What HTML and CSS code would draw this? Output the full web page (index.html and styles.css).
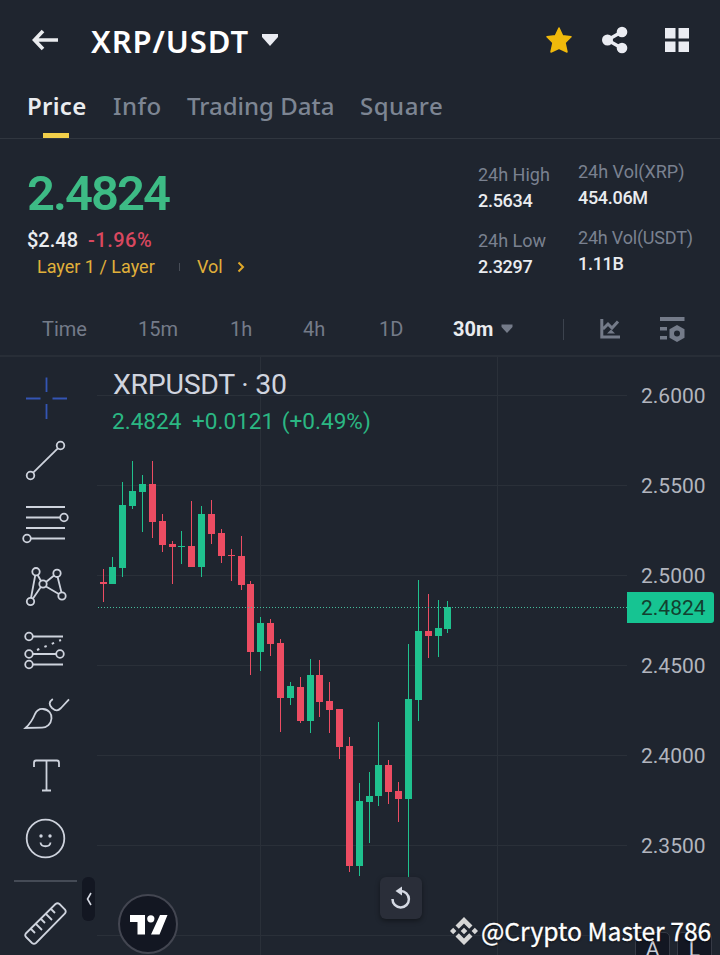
FILE: index.html
```html
<!DOCTYPE html>
<html lang="en">
<head>
    <meta charset="UTF-8">
    <meta name="viewport" content="width=device-width, initial-scale=1.0">
    <title>XRP/USDT</title>
    <link rel="stylesheet" href="styles.css">
</head>
<body>
    <header class="header">
        <svg class="back" width="28" height="22" viewBox="0 0 28 22"><path d="M12 2L3.500 11L12 20M4 11H27"/></svg>
        <h1 class="pair">XRP/USDT</h1>
        <svg class="pair-caret" width="18" height="14" viewBox="0 0 18 14"><path d="M1 1H17V4L9 13L1 4Z"/></svg>
        <div class="header-actions">
            <svg width="28" height="28" viewBox="0 0 28 28"><path class="star" d="M14 2L17.600 9.800L26 10.800L20 16.600L22 26L14 22.300L6 26L8 16.600L2 10.800L10.400 9.800Z"/></svg>
            <svg width="28" height="28" viewBox="0 0 28 28"><path class="share-line" d="M20.500 6L6.500 14L20.500 22"/><g class="light"><circle cx="21" cy="6" r="5.300"/><circle cx="6.500" cy="14" r="5.500"/><circle cx="21" cy="22" r="5.300"/></g></svg>
            <svg width="28" height="28" viewBox="0 0 28 28"><path class="light" d="M2 2H12.500V12.500H2ZM15.500 2H26V12.500H15.500ZM2 15.500H12.500V26H2ZM15.500 15.500H26V26H15.500Z"/></svg>
        </div>
    </header>

    <nav class="tabs">
        <a class="tab active">Price</a>
        <a class="tab tab-info">Info</a>
        <a class="tab tab-data">Trading Data</a>
        <a class="tab tab-square">Square</a>
    </nav>

    <section class="summary">
        <div class="quote">
            <div class="last-price">2.4824</div>
            <div class="fiat"><span class="usd">$2.48</span><span class="change">-1.96%</span></div>
            <div class="tags">
                <span class="tag-layer">Layer 1 / Layer</span>
                <span class="tag-sep"></span>
                <span class="tag-vol">Vol</span>
                <svg width="8" height="12" viewBox="0 0 8 12"><path d="M1.500 1.500L6 6L1.500 10.500"/></svg>
            </div>
        </div>
        <dl class="stats">
            <dt class="high">24h High</dt>
            <dd>2.5634</dd>
            <dt class="low">24h Low</dt>
            <dd>2.3297</dd>
        </dl>
        <dl class="stats volumes">
            <dt class="vol-xrp">24h Vol(XRP)</dt>
            <dd class="amount">454.06M</dd>
            <dt class="vol-usdt">24h Vol(USDT)</dt>
            <dd class="billions">1.11B</dd>
        </dl>
    </section>

    <div class="intervals">
        <span class="i-time">Time</span>
        <span class="i-15m">15m</span>
        <span class="i-1h">1h</span>
        <span class="i-4h">4h</span>
        <span class="i-1d">1D</span>
        <span class="i-30m">30m</span>
        <svg class="i-caret" width="12" height="10" viewBox="0 0 12 10"><path d="M0.500 0.500H11.500V3L6 9L0.500 3Z"/></svg>
        <span class="i-sep"></span>
        <svg class="i-chart" width="20" height="20" viewBox="0 0 20 20"><path class="line" d="M1.800 0V18H20M3 10L8 5L12 9L18 2.500"/><path d="M7 14.500L11 10.500L15 14.500Z"/></svg>
        <svg class="i-settings" width="26" height="26" viewBox="0 0 26 26"><path d="M0 1H24.500V5H0ZM0 11H7V14.500H0ZM0 20H7V23.500H0Z"/><path fill-rule="evenodd" d="M17 9L24.500 13.200V21.800L17 26L9.500 21.800V13.200ZM17 14.500A3 3 0 1 0 17 20.500A3 3 0 1 0 17 14.500Z"/></svg>
    </div>

    <main class="chart">
        <aside class="toolbar">
            <svg viewBox="0 357 97 598" width="97" height="598">
                <!-- crosshair -->
                <path class="cross" d="M46.500 377.500V392M46.500 404V419M26 398.500H40.500M52.500 398.500H67"/>
                <!-- trend line -->
                <path d="M33.200 472.700L57.800 448.300"/>
                <circle cx="30.500" cy="475.500" r="3.800"/><circle cx="60.500" cy="445.500" r="3.800"/>
                <!-- fib levels -->
                <path d="M26 507H65M26 517.500H60M26 528H65M31 538.500H65"/>
                <circle cx="64" cy="517.500" r="3.800"/><circle cx="27" cy="538.500" r="3.800"/>
                <!-- pattern -->
                <path d="M35.300 575L31 598M37.500 574.800L41 581M33 598.500L40.800 587M46 582L54 575.500M57.600 577L61.500 592.500M46 586.500L58.800 594"/>
                <circle cx="36" cy="571.700" r="3.700"/><circle cx="57" cy="573.300" r="3.700"/><circle cx="43" cy="584" r="3.700"/><circle cx="30.500" cy="601.500" r="3.700"/><circle cx="62" cy="596" r="3.700"/>
                <!-- projection -->
                <path d="M33 636.500H63M33 654H56.500M33 664.500H63"/>
                <path class="dots" d="M37 650L61 640"/>
                <circle cx="29" cy="636.500" r="3.800"/><circle cx="29" cy="654" r="3.800"/><circle cx="60" cy="654" r="3.800"/><circle cx="29" cy="664.500" r="3.800"/>
                <!-- brush -->
                <path d="M25.500 728C31 723 33 719 35 714C37 710 40 708.700 43 709C49 709.500 52 714 51.500 718.500C51 724 47 727.700 42 727.700ZM52.800 699C48.500 702 49 705 52 708C56 711.500 58 711 61 708L69 699.300"/>
                <!-- text -->
                <path d="M34 767V763Q34 760.500 36 760.500H57Q59 760.500 59 763V767M46.500 761V790.500M42 790.500H51"/>
                <!-- emoji -->
                <circle cx="45.500" cy="838.500" r="18.800"/>
                <path d="M40.500 842.500C41 847.500 50 847.500 50.500 842.500"/>
                <circle class="eye" cx="41" cy="836" r="1.700"/><circle class="eye" cx="50" cy="836" r="1.700"/>
                <path class="divider" d="M14 881H77"/>
                <!-- ruler -->
                <path d="M25.800 933.500L55.500 904Q57.500 902.500 59.500 904L65 909.500Q66.500 911.500 65 913.500L36 943Q34 944.500 32 943L26 937Q24.500 935.500 25.800 933.500ZM31 929L35 933M36 924L42 930M41 919L45 923M46 914L52 920M51 909L55 913"/>
            </svg>
            <button class="collapse" aria-label="Collapse"><svg width="6" height="14" viewBox="0 0 6 14"><path d="M5 1L1.500 7L5 13"/></svg></button>
        </aside>

        <div class="plot">
            <svg id="candles" viewBox="97 357 530 598" width="530" height="598"></svg>
            <div class="legend">
                <div class="legend-symbol">XRPUSDT · 30</div>
                <div class="legend-values"><span>2.4824</span><span>+0.0121</span><span>(+0.49%)</span></div>
            </div>
            <svg class="tv-badge" width="62" height="62" viewBox="0 0 62 62">
                <circle class="tv-disc" cx="31" cy="31" r="29"/>
                <path d="M13 22H28V41.500H20.500V29H13ZM43 22H50.500L42.500 41.500H34Z"/><circle cx="33.800" cy="25.800" r="3.600"/>
            </svg>
            <button class="reset" aria-label="Reset"><svg width="22" height="24" viewBox="0 0 22 24"><path class="arc" d="M2.500 13A8.200 8.200 0 1 0 10.500 5"/><path class="head" d="M5.500 5L12 0.500V9.500Z"/></svg></button>
        </div>

        <div class="axis">
            <span>2.6000</span>
            <span>2.5500</span>
            <span>2.5000</span>
            <span>2.4500</span>
            <span>2.4000</span>
            <span>2.3500</span>
            <div class="axis-price">2.4824</div>
            <div class="scale-buttons"><button>A</button><button>L</button></div>
        </div>
    </main>

    <div class="watermark">
        <svg width="28" height="28" viewBox="0 0 28 28"><path d="M14 0L22.500 8.500L19.200 11.700L14 6.500L8.800 11.700L5.500 8.500ZM14 28L22.500 19.500L19.200 16.300L14 21.500L8.800 16.300L5.500 19.500ZM0 14L3.200 10.800L6.400 14L3.200 17.200ZM21.600 14L24.800 10.800L28 14L24.800 17.200ZM10.700 14L14 10.700L17.300 14L14 17.300Z"/></svg>
        <span>@Crypto Master 786</span>
    </div>
    <script src="chart.js"></script>
</body>
</html>
```

FILE: styles.css
```css
body {
    background: #1f252f;
    color: #eaecef;
    font-family: Roboto, "Liberation Sans", sans-serif;
    margin: 0;
    height: 955px;
    overflow: hidden;
    position: relative;
}
svg {
    display: block;
    flex: none;
}
span, a, dt, dd {
    white-space: nowrap;
}
button {
    border: none;
    padding: 0;
    font-family: inherit;
}
.header {
    display: flex;
    align-items: center;
    height: 80px;
    padding: 0 29px 0 31px;
    box-sizing: border-box;
}
.back path {
    fill: none;
    stroke: #eaecef;
    stroke-width: 3.6;
}
.back {
    width: 28px;
}
.pair {
    font-family: "Noto Sans", sans-serif;
    font-size: 31px;
    font-weight: 600;
    line-height: 40px;
    letter-spacing: 0.9px;
    color: #fff;
    margin: 1px 0 0 32px;
    width: 158px;
}
.pair-caret {
    margin-left: 12px;
}
.pair-caret path, .light {
    fill: #eaecf2;
}
.header-actions {
    display: flex;
    align-items: center;
    margin-left: auto;
}
.header-actions svg {
    margin-left: 28px;
}
.header-actions svg:last-child {
    margin-left: 34px;
}
.star {
    fill: #f0b90b;
    stroke: #f0b90b;
    stroke-width: 1.5;
    stroke-linejoin: round;
}
.share-line {
    fill: none;
    stroke: #eaecf2;
    stroke-width: 3.4;
}
.tabs {
    display: flex;
    height: 58px;
    padding-left: 27px;
    border-bottom: 1px solid #30363f;
    font-family: "Noto Sans", sans-serif;
    font-size: 24px;
    font-weight: 500;
    line-height: 52px;
    color: #7d8593;
}
.tab {
    letter-spacing: 0.5px;
}
.tab.active {
    color: #eaecef;
    font-weight: 600;
    letter-spacing: 0.3px;
    width: 59px;
    position: relative;
}
.tab.active::after {
    content: "";
    position: absolute;
    left: 16px;
    bottom: 0;
    width: 26px;
    height: 5px;
    background: #f2cf4a;
}
.tab-info {
    margin-left: 27px;
    width: 47px;
}
.tab-data {
    margin-left: 27px;
    width: 146px;
    letter-spacing: 0;
}
.tab-square {
    margin-left: 27px;
}
.summary {
    display: flex;
    height: 164px;
}
.quote {
    width: 478px;
    padding: 27px 0 0 27px;
    box-sizing: border-box;
}
.last-price {
    font-size: 49px;
    font-weight: 600;
    line-height: 56px;
    letter-spacing: -2px;
    color: #3dbb85;
}
.fiat {
    display: flex;
    font-size: 20px;
    font-weight: 500;
    line-height: 24px;
    margin-top: 6px;
}
.usd {
    width: 61px;
}
.change {
    color: #d9485f;
    letter-spacing: 0.5px;
}
.tags {
    display: flex;
    align-items: center;
    margin: 2px 0 0 10px;
    font-size: 18px;
    line-height: 26px;
    color: #e0b03a;
}
.tag-layer {
    width: 142px;
}
.tag-sep {
    width: 1px;
    height: 8px;
    background: #474d57;
}
.tag-vol {
    margin: 0 14px 0 17px;
    width: 26px;
}
.tags path {
    fill: none;
    stroke: #e0a92a;
    stroke-width: 2;
}
.stats {
    margin: 0;
    padding-top: 23px;
    width: 100px;
    font-size: 18px;
    line-height: 26px;
}
.stats.volumes {
    padding-top: 20px;
    width: 130px;
}
.stats dt {
    color: #7a8190;
}
.stats .vol-usdt {
    letter-spacing: -0.2px;
}
.stats dd {
    color: #eaecef;
    font-weight: 500;
    letter-spacing: -0.3px;
    margin: 0 0 14px;
}
.intervals {
    display: flex;
    align-items: center;
    height: 54px;
    padding: 0 0 0 42px;
    border-bottom: 2px solid #282e37;
    box-sizing: border-box;
    font-size: 20px;
    color: #747b89;
}
.intervals path {
    fill: #747b89;
}
.intervals .line {
    fill: none;
    stroke: #747b89;
    stroke-width: 3;
}
.i-time {
    width: 96px;
}
.i-15m {
    width: 92px;
}
.i-1h {
    width: 73px;
}
.i-4h {
    width: 76px;
}
.i-1d {
    width: 74px;
}
.i-30m {
    width: 48px;
    color: #eaecef;
    font-weight: 700;
}
.i-sep {
    width: 1px;
    height: 21px;
    margin-left: 50px;
    background: #3c434e;
}
.i-chart {
    margin-left: 36px;
}
.i-settings {
    margin-left: 40px;
}
.chart {
    display: flex;
    height: 598px;
}
.toolbar {
    width: 97px;
    position: relative;
}
.toolbar path, .toolbar circle {
    fill: none;
    stroke: #ced3dd;
    stroke-width: 1.8;
}
.toolbar .cross {
    stroke: #3455b4;
}
.toolbar .dots {
    stroke-width: 2;
    stroke-dasharray: 2.5 5.5;
}
.toolbar .eye {
    fill: #ced3dd;
    stroke: none;
}
.toolbar .divider {
    stroke: #454b56;
}
.collapse {
    position: absolute;
    left: 82px;
    top: 520px;
    width: 13px;
    height: 44px;
    border-radius: 6px;
    background: #131722;
    display: flex;
    align-items: center;
    justify-content: center;
}
.plot {
    width: 530px;
    position: relative;
}
.grid-line {
    fill: none;
    stroke: #2a3039;
}
.price-line {
    stroke: #45bd9c;
    stroke-dasharray: 1 2;
}
.up {
    fill: #1fc18e;
}
.down {
    fill: #ec4c62;
}
.legend {
    position: absolute;
    left: 16px;
    top: 10px;
}
.legend-symbol {
    font-size: 28.5px;
    line-height: 36px;
    letter-spacing: -0.3px;
    color: #d0d4df;
}
.legend-values {
    display: flex;
    gap: 10.5px;
    margin: -1px 0 0 -1px;
    font-size: 22.6px;
    line-height: 40px;
    color: #2bb783;
}
.legend-values span:last-child {
    margin-left: -3px;
}
.tv-badge {
    position: absolute;
    left: 20px;
    top: 536px;
    fill: #fff;
}
.tv-disc {
    fill: #131722;
    stroke: #434651;
    stroke-width: 2;
}
.reset {
    position: absolute;
    left: 283px;
    top: 520px;
    width: 42px;
    height: 42px;
    border-radius: 6px;
    background: #2a2e39;
    box-shadow: 0 2px 5px #0006;
    display: flex;
    align-items: center;
    justify-content: center;
}
.reset .arc, .collapse path {
    fill: none;
    stroke: #d5d9e3;
    stroke-width: 2.5;
}
.collapse path {
    stroke-width: 1.6;
}
.reset .head {
    fill: #d5d9e3;
}
.axis {
    width: 93px;
    height: 598px;
    padding: 17px 0 0 14px;
    box-sizing: border-box;
    position: relative;
    font-size: 21px;
    color: #b2b5be;
}
.axis span {
    display: block;
    height: 90px;
    line-height: 44px;
}
.axis-price {
    position: absolute;
    left: 0;
    top: 235px;
    width: 87px;
    height: 31px;
    padding-left: 14px;
    box-sizing: border-box;
    line-height: 32px;
    border-radius: 0 3px 3px 0;
    background: #16c492;
    color: #12402f;
}
.scale-buttons {
    position: absolute;
    left: 8px;
    top: 575px;
    display: flex;
    gap: 7px;
}
.scale-buttons button {
    width: 35px;
    height: 35px;
    border: 1px solid #363a45;
    border-radius: 5px;
    background: #131722;
    color: #c9ccd5;
    font-size: 21px;
    line-height: 33px;
}
.watermark {
    position: absolute;
    left: 450px;
    top: 913px;
    display: flex;
    align-items: center;
    height: 36px;
    gap: 3px;
    color: #fff;
    font-family: "Noto Sans CJK SC", sans-serif;
    font-size: 24.7px;
    line-height: 36px;
    text-shadow: 0 1px 2px #000a;
}
.watermark span {
    margin-top: -2px;
    -webkit-text-stroke: 0.3px #fff;
}
.watermark path {
    fill: #d6d6d6;
}
```

FILE: chart.js
```js
const SVG_NS = 'http://www.w3.org/2000/svg';
const svg = document.getElementById('candles');

// x, wick top, body top, body bottom, wick bottom, direction
const candles = [
    [103.5, 569, 582, 584, 602, 'down'],
    [112.5, 557, 567, 584, 584, 'up'],
    [122.5, 482, 505, 568, 577, 'up'],
    [132.5, 461, 491, 506, 509, 'up'],
    [142.5, 475, 484, 492, 532, 'up'],
    [152.5, 461, 484, 522, 538, 'down'],
    [162.5, 514, 521, 545, 552, 'down'],
    [172.5, 541, 544, 547, 584, 'down'],
    [181.5, 531, 546, 547, 564, 'up'],
    [191.5, 501, 546, 567, 567, 'down'],
    [201.5, 506, 514, 567, 577, 'up'],
    [211.5, 500, 514, 534, 544, 'down'],
    [221.5, 529, 533, 556, 563, 'down'],
    [231.5, 549, 555, 556, 581, 'down'],
    [241.5, 536, 556, 585, 590, 'down'],
    [250.5, 581, 584, 652, 675, 'down'],
    [260.5, 617, 623, 652, 671, 'up'],
    [270.5, 619, 623, 644, 656, 'down'],
    [280.5, 639, 643, 698, 732, 'down'],
    [290.5, 682, 686, 698, 705, 'up'],
    [300.5, 677, 687, 721, 723, 'down'],
    [310.5, 659, 675, 721, 733, 'up'],
    [319.5, 660, 675, 702, 717, 'down'],
    [329.5, 682, 701, 710, 733, 'down'],
    [339.5, 709, 709, 747, 759, 'down'],
    [349.5, 737, 746, 866, 872, 'down'],
    [359.5, 783, 801, 866, 876, 'up'],
    [369.5, 772, 796, 802, 843, 'up'],
    [378.5, 722, 765, 796, 806, 'up'],
    [388.5, 760, 765, 792, 804, 'down'],
    [398.5, 782, 791, 799, 822, 'down'],
    [408.5, 644, 699, 799, 878, 'up'],
    [418.5, 580, 631, 700, 721, 'up'],
    [428.5, 594, 631, 636, 658, 'down'],
    [438.5, 600, 628, 636, 657, 'up'],
    [447.5, 601, 607, 629, 633, 'up']
];

function add(tag, attrs) {
    const el = document.createElementNS(SVG_NS, tag);
    for (const key in attrs) el.setAttribute(key, attrs[key]);
    svg.appendChild(el);
}

// grid
for (let y = 395.5; y < 955; y += 90) {
    add('path', { class: 'grid-line', d: `M97 ${y}H627` });
}
[260.5, 497.5].forEach(x => add('path', { class: 'grid-line', d: `M${x} 357V955` }));

candles.forEach(([x, high, top, bottom, low, dir]) => {
    add('rect', { class: dir, x: x - 0.5, y: high, width: 1, height: low - high });
    add('rect', { class: dir, x: x - 3.5, y: top, width: 7, height: bottom - top });
});

// last price
add('path', { class: 'price-line', d: 'M98 607.5H627' });
```
